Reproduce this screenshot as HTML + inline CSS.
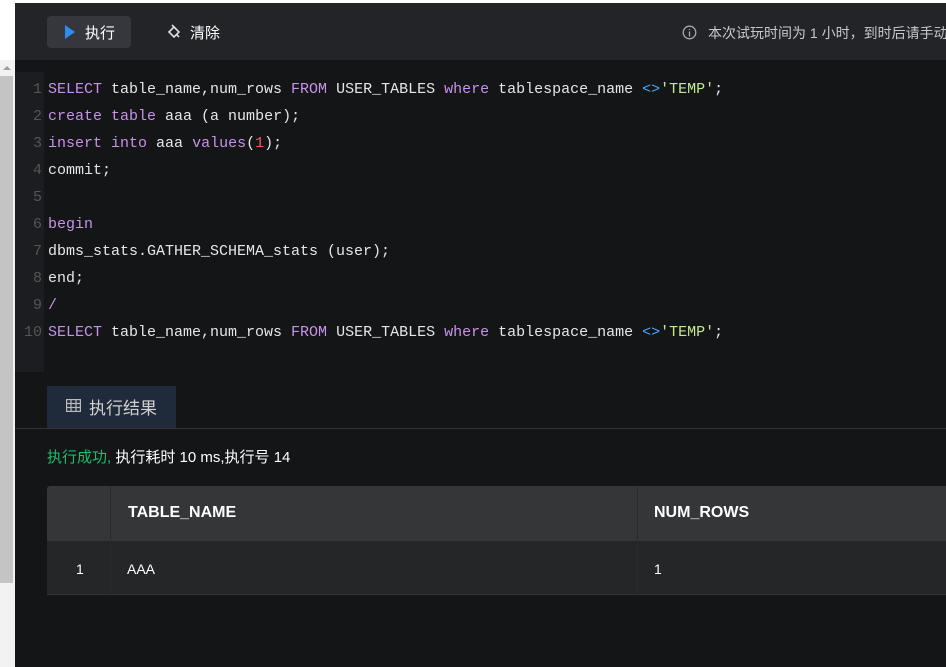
<!DOCTYPE html>
<html><head><meta charset="utf-8"><style>
*{margin:0;padding:0;box-sizing:border-box}
body{width:946px;height:667px;overflow:hidden;background:#fff;position:relative;font-family:"Liberation Sans","Noto Sans CJK SC",sans-serif}
.abs{position:absolute}
.code{font-family:"Liberation Mono",monospace;font-size:15px;color:#e6e6e6;white-space:pre;line-height:27px}
.k{color:#c792ea}.n{color:#f25c5c}.o{color:#4aa8ff}.s{color:#c3e88d}
.ln{font-family:"Liberation Mono",monospace;font-size:15px;color:#555;line-height:27px;text-align:right}
</style></head><body>
<div class="abs" style="left:0;top:60px;width:15px;height:607px;background:#f2f2f2"></div>
<div class="abs" style="left:0;top:76px;width:13px;height:507px;background:#c4c4c4"></div>
<div class="abs" style="left:3px;top:66px;width:0;height:0;border-left:4px solid transparent;border-right:4px solid transparent;border-bottom:4px solid #a0a0a0"></div>
<div class="abs" style="left:15px;top:3px;width:931px;height:57px;background:#232428"></div>
<div class="abs" style="left:47px;top:16px;width:84px;height:32px;background:#35373d;border-radius:4px"></div>
<svg class="abs" style="left:64px;top:25px" width="12" height="14"><path d="M1 0L11 7L1 14Z" fill="#2d8cf0"/></svg>
<div class="abs" style="left:85px;top:22px;color:#fff;font-size:15px">执行</div>
<svg class="abs" style="left:167px;top:24px" width="14" height="14" fill="none" stroke="#ddd" stroke-width="1.6"><path d="M2 8L7 3L12 8L7 13Z M5 1L9 5 M9 10L12 13"/></svg>
<div class="abs" style="left:190px;top:22px;color:#fff;font-size:15px">清除</div>
<svg class="abs" style="left:682px;top:25px" width="15" height="15" fill="none" stroke="#aaa" stroke-width="1.3"><circle cx="7.5" cy="7.5" r="6.3"/><path d="M7.5 6.5V11.5M7.5 4V5"/></svg>
<div class="abs" style="left:708px;top:23px;color:#c8c8c8;font-size:14px;white-space:nowrap">本次试玩时间为 1 小时，到时后请手动</div>
<div class="abs" style="left:15px;top:60px;width:931px;height:607px;background:#141517"></div>
<div class="abs" style="left:15px;top:72px;width:29px;height:300px;background:#1c1d20"></div>
<div class="abs ln" style="left:15px;top:76px;width:27px">1<br>2<br>3<br>4<br>5<br>6<br>7<br>8<br>9<br>10</div>
<div class="abs code" style="left:48px;top:76px"><span class="k">SELECT</span> table_name,num_rows <span class="k">FROM</span> USER_TABLES <span class="k">where</span> tablespace_name <span class="o">&lt;&gt;</span><span class="s">'TEMP'</span>;
<span class="k">create</span> <span class="k">table</span> aaa (a number);
<span class="k">insert</span> <span class="k">into</span> aaa <span class="k">values</span>(<span class="n">1</span>);
commit;

<span class="k">begin</span>
dbms_stats.GATHER_SCHEMA_stats (user);
end;
<span class="k">/</span>
<span class="k">SELECT</span> table_name,num_rows <span class="k">FROM</span> USER_TABLES <span class="k">where</span> tablespace_name <span class="o">&lt;&gt;</span><span class="s">'TEMP'</span>;</div>
<div class="abs" style="left:47px;top:386px;width:129px;height:42px;background:#1f2a3a"></div>
<svg class="abs" style="left:66px;top:399px" width="15" height="13" fill="none" stroke="#bbb" stroke-width="1.2"><rect x="0.6" y="0.6" width="13.8" height="11.8"/><path d="M0.6 4.5H14.4M0.6 8.5H14.4M5 0.6V12.4M10 0.6V12.4"/></svg>
<div class="abs" style="left:89px;top:394px;color:#d0d0d0;font-size:17px">执行结果</div>
<div class="abs" style="left:15px;top:428px;width:931px;height:1px;background:#333"></div>
<div class="abs" style="left:47px;top:446px;font-size:15px;color:#fff;white-space:nowrap"><span style="color:#19be6b">执行成功,</span> 执行耗时 10 ms,执行号 14</div>
<div class="abs" style="left:47px;top:486px;width:899px;height:55px;background:#353638;border-radius:3px 0 0 0"></div>
<div class="abs" style="left:47px;top:541px;width:899px;height:54px;background:#252628;border-bottom:1px solid #333"></div>
<div class="abs" style="left:110px;top:486px;width:1px;height:109px;background:#2a2b2d"></div>
<div class="abs" style="left:637px;top:486px;width:1px;height:109px;background:#2a2b2d"></div>
<div class="abs" style="left:128px;top:504px;color:#fff;font-weight:bold;font-size:16px">TABLE_NAME</div>
<div class="abs" style="left:654px;top:504px;color:#fff;font-weight:bold;font-size:16px">NUM_ROWS</div>
<div class="abs" style="left:76px;top:561px;color:#fff;font-size:14px">1</div>
<div class="abs" style="left:127px;top:561px;color:#fff;font-size:14px">AAA</div>
<div class="abs" style="left:654px;top:561px;color:#fff;font-size:14px">1</div>
</body></html>
